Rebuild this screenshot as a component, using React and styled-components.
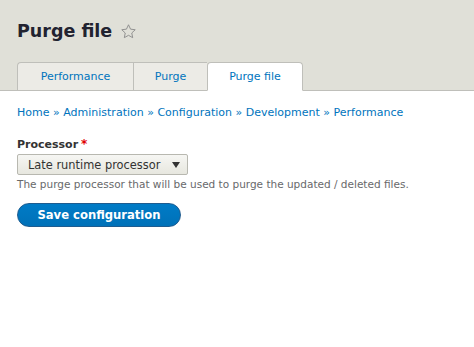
import React from 'react'
import styled, {createGlobalStyle} from 'styled-components'

const GlobalStyle = createGlobalStyle`
    body {
        margin: 0;
        background: #ffffff;
        font-family: "DejaVu Sans", "Noto Sans", sans-serif;
        color: #333333;
    }
`

const Header = styled.div`
    background-color: #e0e0d8;
    padding: 19px 17px 0;
    border-bottom: 1px solid #bfbfba;
`

const Title = styled.h1`
    display: flex;
    align-items: center;
    gap: 8px;
    margin: 0 0 19px;
    font-size: 17.5px;
    font-weight: bold;
    color: #222330;
    line-height: 24px;
`

const Star = styled.svg`
    width: 17px;
    height: 17px;
`

const Tabs = styled.ul`
    display: flex;
    margin: 0;
    padding: 0;
    list-style: none;
    margin-bottom: -1px;
`

const Tab = styled.li`
    width: ${p => p.width}px;
    box-sizing: border-box;
    height: 29px;
    display: flex;
    align-items: center;
    justify-content: center;
    font-size: 11px;
    color: #0074bd;
    background-color: ${p => p.active ? '#ffffff' : '#ecebe6'};
    border: 1px solid #bfbfba;
    border-bottom: ${p => p.active ? '1px solid #ffffff' : '1px solid #bfbfba'};
    border-right: ${p => p.active ? '1px solid #bfbfba' : 'none'};
    border-radius: ${p => p.first ? '4px 0 0 0' : p.active ? '4px 4px 0 0' : '0'};
`

const Content = styled.div`
    padding: 14px 17px;
`

const Breadcrumb = styled.div`
    font-size: 11px;
    color: #0074bd;
    line-height: 16px;
    margin-bottom: 16px;
`

const Label = styled.label`
    display: block;
    font-size: 11px;
    font-weight: bold;
    line-height: 15px;
    margin-bottom: 2px;

    span {
        color: #e00000;
        margin-left: 3px;
        font-size: 12px;
    }
`

const Select = styled.div`
    display: flex;
    align-items: center;
    justify-content: space-between;
    box-sizing: border-box;
    width: 171px;
    height: 21px;
    padding: 0 7px 0 10px;
    font-size: 11.4px;
    color: #333;
    background: linear-gradient(#f6f6f3, #e7e7df);
    border: 1px solid #b8b8b0;
    border-radius: 2px;
    white-space: nowrap;

    svg {
        width: 8px;
        height: 6px;
        flex-shrink: 0;
    }
`

const Description = styled.div`
    font-size: 10.5px;
    color: #68696b;
    margin-top: 3px;
    margin-bottom: 13px;
`

const Button = styled.button`
    box-sizing: border-box;
    width: 164px;
    height: 24px;
    border-radius: 12px;
    border: 1px solid #1e5c90;
    background: linear-gradient(#007bc6, #0071b8);
    color: #ffffff;
    font-family: inherit;
    font-weight: bold;
    font-size: 11.6px;
    padding: 0;
`

const App = () => {
    return (
        <div>
            <GlobalStyle />
            <Header>
                <Title>
                    Purge file
                    <Star viewBox="0 0 24 24" fill="none" stroke="#8a8a8a" strokeWidth="1.3">
                        <path d="M12 2.5l2.9 6.2 6.6.8-4.9 4.6 1.3 6.6L12 17.4l-5.9 3.3 1.3-6.6-4.9-4.6 6.6-.8z" />
                    </Star>
                </Title>
                <Tabs>
                    <Tab first width={116}>Performance</Tab>
                    <Tab width={74}>Purge</Tab>
                    <Tab active width={96}>Purge file</Tab>
                </Tabs>
            </Header>
            <Content>
                <Breadcrumb>
                    Home » Administration » Configuration » Development » Performance
                </Breadcrumb>
                <Label>Processor<span>*</span></Label>
                <Select>
                    Late runtime processor
                    <svg viewBox="0 0 8 6"><path d="M0 0h8L4 6z" fill="#333" /></svg>
                </Select>
                <Description>
                    The purge processor that will be used to purge the updated / deleted files.
                </Description>
                <Button>Save configuration</Button>
            </Content>
        </div>
    )
}

export default App
